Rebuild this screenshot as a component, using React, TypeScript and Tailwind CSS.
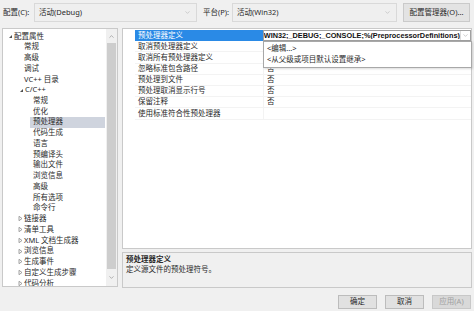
import { ChevronDown, ChevronUp } from "lucide-react";

const FONT = { fontFamily: '"Noto Sans", "Noto Sans CJK SC", sans-serif' };

type TreeItem = { label: string; pad: number; arrow?: "open" | "closed"; selected?: boolean };

const TREE: TreeItem[] = [
  { label: "配置属性", pad: 4, arrow: "open" },
  { label: "常规", pad: 21 },
  { label: "高级", pad: 21 },
  { label: "调试", pad: 21 },
  { label: "VC++ 目录", pad: 21 },
  { label: "C/C++", pad: 15, arrow: "open" },
  { label: "常规", pad: 30 },
  { label: "优化", pad: 30 },
  { label: "预处理器", pad: 30, selected: true },
  { label: "代码生成", pad: 30 },
  { label: "语言", pad: 30 },
  { label: "预编译头", pad: 30 },
  { label: "输出文件", pad: 30 },
  { label: "浏览信息", pad: 30 },
  { label: "高级", pad: 30 },
  { label: "所有选项", pad: 30 },
  { label: "命令行", pad: 30 },
  { label: "链接器", pad: 14, arrow: "closed" },
  { label: "清单工具", pad: 14, arrow: "closed" },
  { label: "XML 文档生成器", pad: 14, arrow: "closed" },
  { label: "浏览信息", pad: 14, arrow: "closed" },
  { label: "生成事件", pad: 14, arrow: "closed" },
  { label: "自定义生成步骤", pad: 14, arrow: "closed" },
  { label: "代码分析", pad: 14, arrow: "closed" },
];

// name / value rows of the property grid
const ROWS: [string, string][] = [
  ["预处理器定义", ""],
  ["取消预处理器定义", ""],
  ["取消所有预处理器定义", ""],
  ["忽略标准包含路径", "否"],
  ["预处理到文件", "否"],
  ["预处理取消显示行号", "否"],
  ["保留注释", "否"],
  ["使用标准符合性预处理器", ""],
];

function Arrow({ kind }: { kind: "open" | "closed" }) {
  if (kind === "open") {
    return (
      <svg width="7" height="7" viewBox="0 0 7 7" className="shrink-0">
        <path d="M5 2 L5 5 L2 5 Z" fill="#505050" />
      </svg>
    );
  }
  return (
    <svg width="7" height="7" viewBox="0 0 7 7" className="shrink-0">
      <path d="M2 1.3 L5 3.5 L2 5.7 Z" fill="none" stroke="#8a8a8a" strokeWidth="0.8" />
    </svg>
  );
}

function Combo({ label, width }: { label: string; width: string }) {
  return (
    <div className={`${width} h-[19px] flex items-center justify-between border border-[#d9d9d9] bg-[#efefef] pl-[4px] pr-[5px]`}>
      <span className="text-[7.5px] whitespace-nowrap">{label}</span>
      <ChevronDown size={7} strokeWidth={1.5} className="text-[#a0a0a0]" />
    </div>
  );
}

export default function App() {
  return (
    <div className="w-[474px] h-[311px] bg-[#f0f0f0] overflow-hidden flex flex-col text-[#2a2a2a] leading-none" style={FONT}>
      {/* top bar */}
      <div className="h-[28px] flex items-start pt-[3px] pl-[3px]">
        <span className="text-[7.5px] mt-[6px] w-[31px] whitespace-nowrap">配置(C):</span>
        <Combo label="活动(Debug)" width="w-[163px]" />
        <span className="text-[7.5px] mt-[6px] ml-[6px] w-[29px] whitespace-nowrap">平台(P):</span>
        <Combo label="活动(Win32)" width="w-[165px]" />
        <div className="ml-[6px] w-[67px] h-[19px] flex items-center justify-center border border-[#cacaca] bg-[#e3e3e3] text-[7.5px] whitespace-nowrap">
          配置管理器(O)...
        </div>
      </div>

      <div className="flex h-[260px]">
        {/* tree */}
        <div className="ml-[2px] w-[116px] h-[259px] border border-[#c9c9c9] bg-white flex">
          <div className="flex-1 overflow-hidden pt-[2px]">
            {TREE.map((t, i) => (
              <div key={i} className="h-[10.74px] flex items-center text-[7.5px]">
                <div className={`flex items-center h-full ${t.selected ? "bg-[#cfd4de] ml-[27px] w-[75px]" : ""}`}>
                  <div style={{ width: t.selected ? 3 : t.pad }} className="shrink-0" />
                  {t.arrow && <Arrow kind={t.arrow} />}
                  <span className="whitespace-nowrap">{t.label}</span>
                </div>
              </div>
            ))}
          </div>
          <div className="w-[11px] bg-[#f0f0f0] flex flex-col items-center">
            <ChevronUp size={7} strokeWidth={1.5} className="text-[#606060] mt-[4px]" />
            <div className="w-[9px] flex-1 bg-[#cdcdcd] mt-[3px] mb-[5px]" />
            <ChevronDown size={7} strokeWidth={1.5} className="text-[#606060] mb-[5px]" />
          </div>
        </div>

        {/* right side */}
        <div className="ml-[4px] w-[350px] flex flex-col">
          <div className="relative h-[221px] border border-[#c9c9c9] bg-white pt-[1px]">
            {ROWS.map(([name, value], i) => (
              <div key={i} className="h-[11.2px] flex text-[7.5px]">
                <div className="w-[12px]" />
                <div className={`w-[128px] flex items-center pl-[3px] whitespace-nowrap ${i === 0 ? "bg-[#2a8ae6] text-white" : "border-b border-[#f3f3f3]"}`}>
                  {name}
                </div>
                {i === 0 ? (
                  <div className="w-[208px] flex items-center border border-[#a0a0a0] bg-white">
                    <div className="flex-1 overflow-hidden flex justify-end">
                      <span
                        className="whitespace-nowrap font-bold text-[7.3px] text-[#111]"
                        style={{ fontFamily: '"Liberation Sans", sans-serif' }}
                      >
                        WIN32;_DEBUG;_CONSOLE;%(PreprocessorDefinitions)
                      </span>
                    </div>
                    <div className="w-[10px] h-full flex items-center justify-center border-l border-[#dcdcdc]">
                      <ChevronDown size={7} strokeWidth={1.5} className="text-[#909090]" />
                    </div>
                  </div>
                ) : (
                  <div className="w-[208px] flex items-center pl-[3px] border-b border-l border-[#f3f3f3]">{value}</div>
                )}
              </div>
            ))}

            {/* open dropdown */}
            <div className="absolute left-[140px] top-[12px] w-[209px] h-[27px] bg-white border border-[#a8a8a8] shadow-[1px_1px_2px_rgba(0,0,0,0.15)] pt-[1px] pl-[3px] text-[7.5px]">
              <div className="h-[11px] flex items-center">&lt;编辑...&gt;</div>
              <div className="h-[11px] flex items-center">&lt;从父级或项目默认设置继承&gt;</div>
            </div>
          </div>

          <div className="mt-[3px] h-[36px] border border-[#c9c9c9] bg-[#f0f0f0] px-[3px] pt-[1px] text-[7.5px] leading-[10px]">
            <div className="font-bold">预处理器定义</div>
            <div>定义源文件的预处理符号。</div>
          </div>
        </div>
      </div>

      {/* footer buttons */}
      <div className="flex justify-end gap-[8px] pr-[3px] mt-[7px]">
        <div className="w-[39px] h-[14px] flex items-center justify-center border border-[#bcbcbc] bg-[#e1e1e1] text-[7.5px]">确定</div>
        <div className="w-[39px] h-[14px] flex items-center justify-center border border-[#bcbcbc] bg-[#e1e1e1] text-[7.5px]">取消</div>
        <div className="w-[39px] h-[14px] flex items-center justify-center border border-[#c8c8c8] bg-[#d9d9d9] text-[7.5px] text-[#a0a0a0]">应用(A)</div>
      </div>
    </div>
  );
}
